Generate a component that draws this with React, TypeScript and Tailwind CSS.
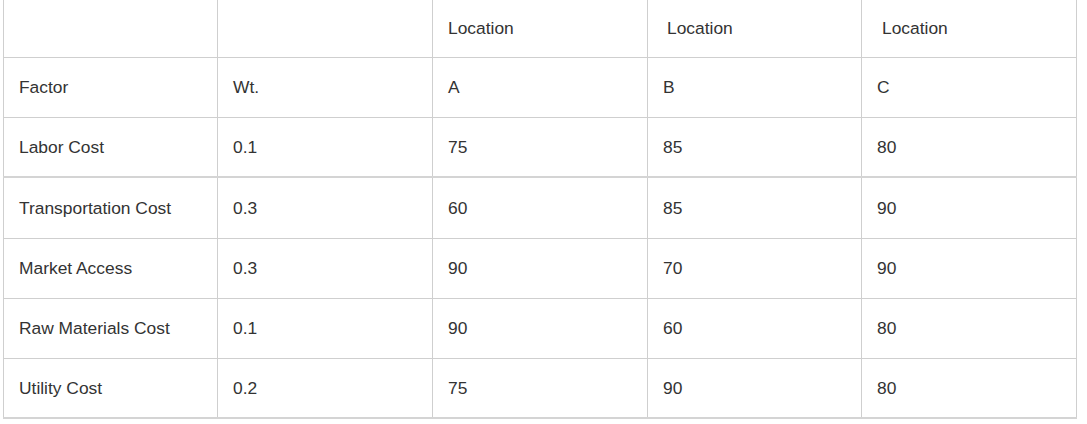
const rows: string[][] = [
  ["Factor", "Wt.", "A", "B", "C"],
  ["Labor Cost", "0.1", "75", "85", "80"],
  ["Transportation Cost", "0.3", "60", "85", "90"],
  ["Market Access", "0.3", "90", "70", "90"],
  ["Raw Materials Cost", "0.1", "90", "60", "80"],
  ["Utility Cost", "0.2", "75", "90", "80"],
];

const widths = ["w-[214px]", "w-[215px]", "w-[215px]", "w-[214px]", "w-[215px]"];

export default function App() {
  return (
    <div
      className="bg-white w-[1087px] h-[424px] overflow-hidden pl-[3px] text-[#333] text-[17.4px]"
      style={{ fontFamily: '"Liberation Sans", Arial, sans-serif' }}
    >
      <table className="border-collapse table-fixed w-[1073px]">
        <tbody>
          <tr className="h-[57px]">
            <td className={`${widths[0]} border-x border-[#cfcfcf]`} />
            <td className={`${widths[1]} border-x border-[#cfcfcf]`} />
            <td className={`${widths[2]} border-x border-[#cfcfcf] pl-[15px]`}>Location</td>
            <td className={`${widths[3]} border-x border-[#cfcfcf] pl-[19px]`}>Location</td>
            <td className={`${widths[4]} border-x border-[#cfcfcf] pl-[20px]`}>Location</td>
          </tr>
          {rows.map((r, i) => (
            <tr
              key={i}
              className={
                i === 2
                  ? "h-[61px] border-t-2 border-[#d4d4d4]"
                  : "h-[60px] border-t border-[#cfcfcf]"
              }
            >
              {r.map((c, j) => (
                <td key={j} className="border-x border-[#cfcfcf] pl-[15px] pt-[1px]">
                  {c}
                </td>
              ))}
            </tr>
          ))}
          <tr className="border-t-2 border-[#d4d4d4]">
            <td colSpan={5} className="h-0 p-0" />
          </tr>
        </tbody>
      </table>
    </div>
  );
}
